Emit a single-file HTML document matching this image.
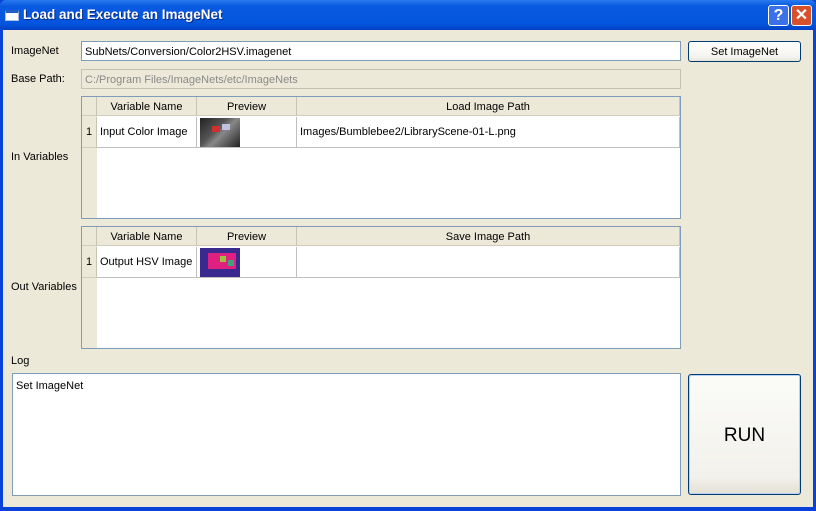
<!DOCTYPE html>
<html><head><style>
*{margin:0;padding:0;box-sizing:border-box}
body{width:816px;height:511px;overflow:hidden;font-family:"Liberation Sans",sans-serif;font-size:11px;background:#0842d8;position:relative}
.abs{position:absolute}
#title{left:0;top:0;width:816px;height:30px;background:linear-gradient(#2a7af0,#0a5ae0 20%,#0455dd 80%,#0340c4);border-radius:6px 6px 0 0}
#body{left:3px;top:30px;width:810px;height:477px;background:#ECE9D8}
.lbl{color:#000}
.inp{background:#fff;border:1px solid #7f9db9;padding:3px 3px 1px;line-height:14px}
.btn{border:1px solid #003c74;border-radius:3px;background:linear-gradient(#fff,#f4f3ee 80%,#e6e3d6);text-align:center}
.tbl{border:1px solid #7f9db9;background:#fff;overflow:hidden}
.hdr{top:0;height:19px;background:#ECE9D8;border-bottom:1px solid #d0cdbf}
.hc{top:0;height:19px;line-height:20px;text-align:center;border-right:1px solid #c7c5b2}
.cell{height:31px;line-height:31px;border-right:1px solid #c0c0c0;border-bottom:1px solid #c0c0c0;padding-left:3px}
</style></head><body>
<div id="title" class="abs">
 <div class="abs" style="left:5px;top:10px;width:14px;height:11px;background:#fff;border:1px solid #a8c0e8;border-top:3px solid #2060c0"></div>
 <div class="abs" style="left:23px;top:7px;color:#fff;font-weight:bold;font-size:13.5px;text-shadow:1px 1px #0a2a80">Load and Execute an ImageNet</div>
 <div class="abs" style="left:768px;top:5px;width:21px;height:21px;border:1px solid #fff;border-radius:3px;background:#3a70e8;color:#fff;font-weight:bold;font-size:16px;text-align:center;line-height:19px">?</div>
 <div class="abs" style="left:791px;top:5px;width:21px;height:21px;border:1px solid #fff;border-radius:3px;background:#d8502a;color:#fff;font-weight:bold;font-size:16px;text-align:center;line-height:19px">✕</div>
</div>
<div id="body" class="abs"></div>
<div class="abs lbl" style="left:11px;top:45px">ImageNet</div>
<div class="abs inp" style="left:81px;top:41px;width:600px;height:20px">SubNets/Conversion/Color2HSV.imagenet</div>
<div class="abs btn" style="left:688px;top:41px;width:113px;height:21px;line-height:20px">Set ImageNet</div>
<div class="abs lbl" style="left:11px;top:73px">Base Path:</div>
<div class="abs inp" style="left:81px;top:69px;width:600px;height:20px;background:#ECE9D8;color:#8a8a8a;border-color:#c5c2b2">C:/Program Files/ImageNets/etc/ImageNets</div>

<div class="abs lbl" style="left:11px;top:151px">In Variables</div>
<div class="abs tbl" style="left:81px;top:96px;width:600px;height:123px">
 <div class="abs" style="left:0;top:0;width:15px;height:121px;background:#ECE9D8"></div>
 <div class="abs hdr" style="left:0;width:598px"></div>
 <div class="abs hc" style="left:0;width:15px"></div>
 <div class="abs hc" style="left:15px;width:100px">Variable Name</div>
 <div class="abs hc" style="left:115px;width:100px">Preview</div>
 <div class="abs hc" style="left:215px;width:383px">Load Image Path</div>
 <div class="abs" style="left:0;top:20px;width:15px;height:31px;line-height:31px;text-align:center;border-right:1px solid #c7c5b2;border-bottom:1px solid #d0cdbf">1</div>
 <div class="abs cell" style="left:15px;top:20px;width:100px">Input Color Image</div>
 <div class="abs cell" style="left:115px;top:20px;width:100px"><div class="abs" style="left:3px;top:1px;width:40px;height:29px;background:linear-gradient(135deg,#222,#555 40%,#888 55%,#222)"><div class="abs" style="left:12px;top:8px;width:8px;height:6px;background:#d03030"></div><div class="abs" style="left:22px;top:6px;width:8px;height:6px;background:#c0c0e0"></div></div></div>
 <div class="abs cell" style="left:215px;top:20px;width:383px">Images/Bumblebee2/LibraryScene-01-L.png</div>
</div>

<div class="abs lbl" style="left:11px;top:281px">Out Variables</div>
<div class="abs tbl" style="left:81px;top:226px;width:600px;height:123px">
 <div class="abs" style="left:0;top:0;width:15px;height:121px;background:#ECE9D8"></div>
 <div class="abs hdr" style="left:0;width:598px"></div>
 <div class="abs hc" style="left:0;width:15px"></div>
 <div class="abs hc" style="left:15px;width:100px">Variable Name</div>
 <div class="abs hc" style="left:115px;width:100px">Preview</div>
 <div class="abs hc" style="left:215px;width:383px">Save Image Path</div>
 <div class="abs" style="left:0;top:20px;width:15px;height:31px;line-height:31px;text-align:center;border-right:1px solid #c7c5b2;border-bottom:1px solid #d0cdbf">1</div>
 <div class="abs cell" style="left:15px;top:20px;width:100px">Output HSV Image</div>
 <div class="abs cell" style="left:115px;top:20px;width:100px"><div class="abs" style="left:3px;top:1px;width:40px;height:29px;background:#3a2a90"><div class="abs" style="left:8px;top:5px;width:28px;height:16px;background:#e02080"></div><div class="abs" style="left:20px;top:8px;width:6px;height:6px;background:#a0c040"></div><div class="abs" style="left:28px;top:12px;width:6px;height:6px;background:#40a080"></div></div></div>
 <div class="abs cell" style="left:215px;top:20px;width:383px"></div>
</div>

<div class="abs lbl" style="left:11px;top:355px">Log</div>
<div class="abs inp" style="left:12px;top:373px;width:669px;height:123px;padding:5px 3px">Set ImageNet</div>
<div class="abs btn" style="left:688px;top:374px;width:113px;height:121px;line-height:121px;font-size:19px;background:linear-gradient(#fbfbf8,#f2f1ec 85%,#e4e1d4);box-shadow:inset 1px 1px 0 #b8d0f8,inset -1px -1px 0 #b8d0f8">RUN</div>
</body></html>
